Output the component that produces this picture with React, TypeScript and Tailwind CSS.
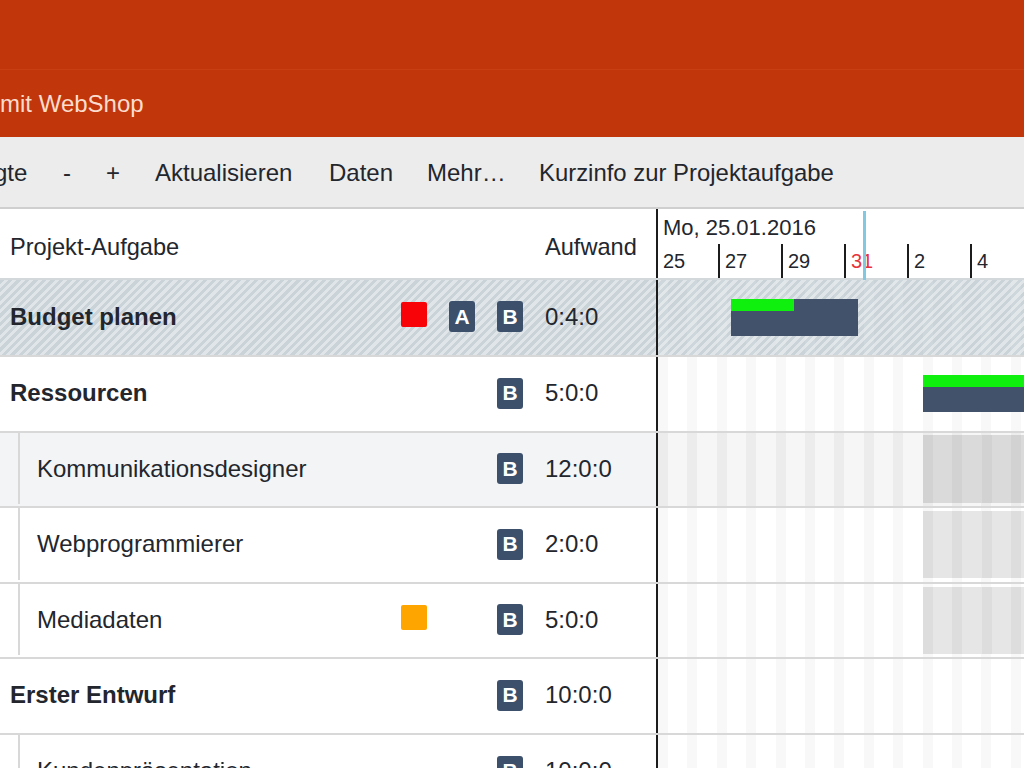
const stripes =
  'bg-[repeating-linear-gradient(90deg,#f8f8f8_0,#f8f8f8_10px,transparent_10px,transparent_29.4px)]';
const greyStripes =
  'bg-[#f6f6f6] bg-[repeating-linear-gradient(90deg,#ececec_0,#ececec_10px,transparent_10px,transparent_29.4px)]';
const hatchStripes =
  'bg-[repeating-linear-gradient(90deg,#ffffff18_0,#ffffff18_10px,transparent_10px,transparent_29.4px)]';
const hatch =
  'bg-[repeating-linear-gradient(135deg,#c9d3d8_0,#c9d3d8_3px,#dfe5e8_3px,#dfe5e8_6px)]';

type Row = {
  name: string;
  effort: string;
  bold?: boolean;
  sub?: boolean;
  flag?: string;
  a?: boolean;
  h: string;
  tone?: 'hatch' | 'grey';
  bar?: 'one' | 'two' | 'block' | 'blockDark';
};

const ROWS: Row[] = [
  { name: 'Budget planen', effort: '0:4:0', bold: true, flag: 'bg-[#f80308]', a: true, h: 'h-[77px]', tone: 'hatch', bar: 'one' },
  { name: 'Ressourcen', effort: '5:0:0', bold: true, h: 'h-[76px]', bar: 'two' },
  { name: 'Kommunikationsdesigner', effort: '12:0:0', sub: true, h: 'h-[75px]', tone: 'grey', bar: 'blockDark' },
  { name: 'Webprogrammierer', effort: '2:0:0', sub: true, h: 'h-[76px]', bar: 'block' },
  { name: 'Mediadaten', effort: '5:0:0', sub: true, flag: 'bg-[#ffa500]', h: 'h-[75px]', bar: 'block' },
  { name: 'Erster Entwurf', effort: '10:0:0', bold: true, h: 'h-[76px]' },
  { name: 'Kundenpräsentation', effort: '10:0:0', sub: true, h: 'h-[76px]' },
];

function Badge({ letter }: { letter: string }) {
  return (
    <span className="flex h-[31px] w-[26px] items-center justify-center rounded-[3px] bg-[#3c506b] text-[21px] font-bold text-white">
      {letter}
    </span>
  );
}

function GanttBar({ bar }: { bar: Row['bar'] }) {
  if (bar === 'one') {
    return (
      <div className="pl-[73px] pt-[19px]">
        <div className="h-[37px] w-[127px] bg-[#42526a]">
          <div className="h-[12px] w-[63px] bg-[#0ff00f]" />
        </div>
      </div>
    );
  }
  if (bar === 'two') {
    return (
      <div className="pl-[265px] pt-[18px]">
        <div className="h-[37px] bg-[#42526a]">
          <div className="h-[12px] bg-[#0ff00f]" />
        </div>
      </div>
    );
  }
  if (bar === 'blockDark') {
    return (
      <div className="pl-[265px] pt-[2px]">
        <div className="h-[68px] bg-[#dadada] bg-[repeating-linear-gradient(90deg,#d2d2d2_0,#d2d2d2_10px,transparent_10px,transparent_29.4px)]" />
      </div>
    );
  }
  if (bar === 'block') {
    return (
      <div className="pl-[265px] pt-[3px]">
        <div className="h-[67px] bg-[#e6e6e6] bg-[repeating-linear-gradient(90deg,#dddddd_0,#dddddd_10px,transparent_10px,transparent_29.4px)]" />
      </div>
    );
  }
  return null;
}

export default function App() {
  return (
    <div className="h-[768px] w-[1024px] overflow-hidden bg-white font-['Liberation_Sans',Arial,sans-serif] text-[#23262d]">
      <div className="flex h-[137px] flex-col bg-[#c1360b]">
        <div className="h-[70px] border-b border-[#c83f14]" />
        <div className="flex flex-1 items-center text-[24px] text-[#fbdccd]">mit WebShop</div>
      </div>

      <div className="flex h-[72px] items-center overflow-hidden border-b-2 border-[#cfcfcf] bg-[#ececec] pt-[2px] text-[24px] whitespace-nowrap">
        <span className="-ml-[6px] w-[69px] shrink-0">gte</span>
        <span className="w-[43px] shrink-0">-</span>
        <span className="w-[49px] shrink-0">+</span>
        <span className="w-[174px] shrink-0">Aktualisieren</span>
        <span className="w-[98px] shrink-0">Daten</span>
        <span className="w-[112px] shrink-0">Mehr…</span>
        <span className="text-[23.9px]">Kurzinfo zur Projektaufgabe</span>
      </div>

      <div className="flex h-[71px] border-b-2 border-[#d3d8da]">
        <div className="flex w-[656px] shrink-0 items-center pt-[8px] text-[23.6px]">
          <span className="flex-1 pl-[10px]">Projekt-Aufgabe</span>
          <span className="w-[111px]">Aufwand</span>
        </div>
        <div className="relative flex-1 border-l-2 border-[#1c1c1c] pl-[5px]">
          <div className="pt-[5px] text-[22px] leading-[28px]">Mo, 25.01.2016</div>
          <div className="flex h-[36px] pt-[2px]">
            {['25', '27', '29', '31', '2', '4'].map((d, i) => (
              <span
                key={d}
                className={`text-[20px] leading-[34px] ${i === 0 ? 'w-[55px]' : 'w-[63px] border-l-2 border-[#1c1c1c] pl-[5px]'} ${d === '31' ? 'text-[#e8333c]' : ''}`}
              >
                {d}
              </span>
            ))}
          </div>
          <div className="absolute top-[2px] left-[205px] h-[69px] w-[3px] bg-[#82c8e0]" />
        </div>
      </div>

      {ROWS.map((r) => (
        <div
          key={r.name}
          className={`flex border-b-2 border-[#d8d8d8] ${r.h} ${r.tone === 'hatch' ? hatch : ''} ${r.tone === 'grey' ? 'bg-[#f3f4f6]' : ''}`}
        >
          <div className="flex w-[656px] shrink-0 items-center gap-[22px] pb-[2px] text-[24px]">
            <div className="flex h-full flex-1 items-center">
              {r.sub ? (
                <div className="ml-[18px] flex h-full items-center border-l-2 border-[#d8d8d8] pl-[17px]">{r.name}</div>
              ) : (
                <div className={`pl-[10px] ${r.bold ? 'font-bold' : ''}`}>{r.name}</div>
              )}
            </div>
            <div className="w-[26px]">
              {r.flag ? <div className={`-mt-[5px] h-[25px] w-[26px] rounded-[2px] ${r.flag}`} /> : null}
            </div>
            <div className="w-[26px]">{r.a ? <Badge letter="A" /> : null}</div>
            <Badge letter="B" />
            <span className="w-[111px]">{r.effort}</span>
          </div>
          <div
            className={`min-w-0 flex-1 overflow-hidden border-l-2 border-[#1c1c1c] ${r.tone === 'grey' ? greyStripes : r.tone === 'hatch' ? hatchStripes : stripes}`}
          >
            <GanttBar bar={r.bar} />
          </div>
        </div>
      ))}
    </div>
  );
}
